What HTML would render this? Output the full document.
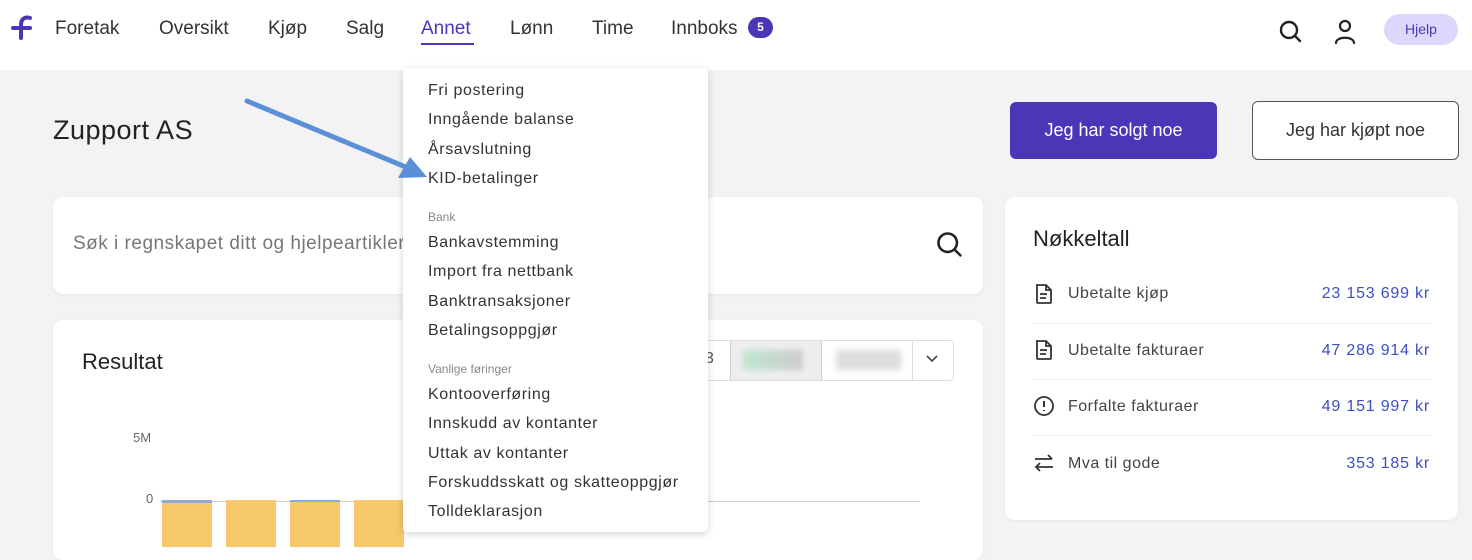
<!DOCTYPE html>
<html><head><meta charset="utf-8"><style>
*{margin:0;padding:0;box-sizing:border-box}
body{width:1472px;height:547px;overflow:hidden;background:#f3f3f3;font-family:"Liberation Sans",sans-serif;color:#2b2b2b;position:relative}
.abs{position:absolute}
.nav{position:absolute;left:0;top:0;width:1472px;height:70px;background:#fff}
.nav span{position:absolute;top:18px;font-size:19px;color:#333}
.card{position:absolute;background:#fff;border-radius:10px;box-shadow:0 1px 3px rgba(0,0,0,.06)}
.menu{position:absolute;left:403px;top:68px;width:305px;height:464px;background:#fff;border-radius:4px;box-shadow:0 2px 8px rgba(0,0,0,.18)}
.menu div{position:absolute;left:25px;font-size:16px;color:#333;letter-spacing:0.6px}
.menu .h{font-size:12px;color:#888;letter-spacing:0}
.row{position:absolute;left:1030px;width:400px;font-size:16px;color:#444;letter-spacing:0.5px}
.row .v{position:absolute;right:0;color:#3d4fbf;letter-spacing:0.8px}
.row .t{position:absolute;left:38px}
.sep{position:absolute;left:1032px;width:400px;height:1px;background:#eee}
.bar{position:absolute;top:500px;width:50px;height:47px;background:#f5c96b}
</style></head><body>
<div class="nav">
<svg class="abs" style="left:10px;top:14px" width="26" height="26" viewBox="0 0 26 26"><path d="M20 4 C14 2 11 6 11 11 L11 24" stroke="#4b36b8" stroke-width="4" fill="none" stroke-linecap="round"/><path d="M3 14 H20" stroke="#4b36b8" stroke-width="4" stroke-linecap="round"/></svg>
<span style="left:55px">Foretak</span><span style="left:159px">Oversikt</span><span style="left:268px">Kjøp</span><span style="left:346px">Salg</span><span style="left:421px;color:#4b36b8">Annet</span>
<div class="abs" style="left:421px;top:43px;width:53px;height:2px;background:#4b36b8"></div>
<span style="left:510px">Lønn</span><span style="left:592px">Time</span><span style="left:671px">Innboks</span>
<div class="abs" style="left:748px;top:17px;width:25px;height:21px;border-radius:11px;background:#4b36b8;color:#fff;font-size:12px;text-align:center;line-height:21px;font-weight:bold">5</div>
<svg class="abs" style="left:1278px;top:19px" width="26" height="26" viewBox="0 0 26 26"><circle cx="11" cy="11" r="8" stroke="#222" stroke-width="2.4" fill="none"/><path d="M17 17 L22 22" stroke="#222" stroke-width="2.4" stroke-linecap="round"/></svg>
<svg class="abs" style="left:1332px;top:18px" width="26" height="28" viewBox="0 0 26 28"><circle cx="13" cy="8" r="5" stroke="#222" stroke-width="2.2" fill="none"/><path d="M4 25 C4 18 22 18 22 25" stroke="#222" stroke-width="2.2" fill="none" stroke-linecap="round"/></svg>
<div class="abs" style="left:1384px;top:14px;width:74px;height:31px;border-radius:16px;background:#dcd8fb;color:#4b36b8;font-size:14px;text-align:center;line-height:31px">Hjelp</div>
</div>
<div class="abs" style="left:53px;top:115px;font-size:27px;color:#222;letter-spacing:0.5px">Zupport AS</div>
<div class="abs" style="left:1010px;top:102px;width:207px;height:57px;border-radius:6px;background:#4b36b8;color:#fff;font-size:18px;text-align:center;line-height:57px">Jeg har solgt noe</div>
<div class="abs" style="left:1252px;top:101px;width:207px;height:59px;border-radius:6px;background:#fff;border:1.5px solid #555;color:#333;font-size:18px;text-align:center;line-height:56px">Jeg har kjøpt noe</div>
<div class="card" style="left:53px;top:197px;width:930px;height:97px">
<div class="abs" style="left:20px;top:36px;font-size:19px;color:#777;letter-spacing:0.5px">Søk i regnskapet ditt og hjelpeartikler</div>
<svg class="abs" style="left:882px;top:33px" width="30" height="30" viewBox="0 0 26 26"><circle cx="11" cy="11" r="8" stroke="#222" stroke-width="2.2" fill="none"/><path d="M17 17 L22 22" stroke="#222" stroke-width="2.2" stroke-linecap="round"/></svg>
</div>
<div class="card" style="left:53px;top:320px;width:930px;height:240px">
<div class="abs" style="left:29px;top:29px;font-size:22px;color:#222">Resultat</div>
<div class="abs" style="left:80px;top:110px;font-size:13px;color:#666">5M</div>
<div class="abs" style="left:93px;top:171px;font-size:13px;color:#666">0</div>
<div class="abs" style="left:107px;top:181px;width:760px;height:1px;background:#ccc"></div>
<div class="abs" style="left:637px;top:20px;width:264px;height:41px;border:1px solid #ddd;border-radius:4px;background:#fff"></div>
<div class="abs" style="left:652px;top:30px;font-size:16px;color:#555">3</div>
<div class="abs" style="left:677px;top:21px;width:92px;height:39px;background:#eee;border-left:1px solid #ccc;border-right:1px solid #ccc"></div>
<div class="abs" style="left:690px;top:30px;width:60px;height:20px;background:linear-gradient(90deg,#bfe7d2,#ccc);filter:blur(3px)"></div>
<div class="abs" style="left:783px;top:30px;width:65px;height:20px;background:#ddd;filter:blur(3px)"></div>
<div class="abs" style="left:859px;top:21px;width:1px;height:39px;background:#ddd"></div>
<svg class="abs" style="left:872px;top:34px" width="14" height="10" viewBox="0 0 14 10"><path d="M2 2 L7 7 L12 2" stroke="#444" stroke-width="1.6" fill="none"/></svg>
</div>
<div class="bar" style="left:162px;border-top:3px solid #8fa9d8"></div>
<div class="bar" style="left:226px"></div>
<div class="bar" style="left:290px;border-top:2px solid #8fa9d8"></div>
<div class="bar" style="left:354px"></div>
<div class="card" style="left:1005px;top:197px;width:453px;height:323px"></div>
<div class="abs" style="left:1033px;top:226px;font-size:22px;color:#222">Nøkkeltall</div>
<svg class="abs" style="left:1034px;top:283px" width="20" height="22" viewBox="0 0 20 22"><path d="M3 2 H12 L17 7 V19 a1 1 0 0 1 -1 1 H4 a1 1 0 0 1 -1 -1 Z M12 2 V7 H17 M6 11 H13 M6 15 H12" stroke="#333" stroke-width="1.8" fill="none"/></svg>
<svg class="abs" style="left:1034px;top:339px" width="20" height="22" viewBox="0 0 20 22"><path d="M3 2 H12 L17 7 V19 a1 1 0 0 1 -1 1 H4 a1 1 0 0 1 -1 -1 Z M12 2 V7 H17 M6 11 H13 M6 15 H12" stroke="#333" stroke-width="1.8" fill="none"/></svg>
<svg class="abs" style="left:1033px;top:395px" width="22" height="22" viewBox="0 0 22 22"><circle cx="11" cy="11" r="9" stroke="#333" stroke-width="1.8" fill="none"/><path d="M11 6 V12 M11 15 V16" stroke="#333" stroke-width="2"/></svg>
<svg class="abs" style="left:1033px;top:452px" width="22" height="22" viewBox="0 0 22 22"><path d="M2 7 H19 M15 3 L19 7 M20 15 H3 M7 11 L3 15 L7 19" stroke="#333" stroke-width="1.8" fill="none"/></svg>
<div class="row" style="top:285px"><span class="t">Ubetalte kjøp</span><span class="v">23 153 699 kr</span></div>
<div class="sep" style="top:323px"></div>
<div class="row" style="top:342px"><span class="t">Ubetalte fakturaer</span><span class="v">47 286 914 kr</span></div>
<div class="sep" style="top:379px"></div>
<div class="row" style="top:398px"><span class="t">Forfalte fakturaer</span><span class="v">49 151 997 kr</span></div>
<div class="sep" style="top:435px"></div>
<div class="row" style="top:455px"><span class="t">Mva til gode</span><span class="v">353 185 kr</span></div>
<div class="menu">
<div style="top:14px">Fri postering</div>
<div style="top:43px">Inngående balanse</div>
<div style="top:73px">Årsavslutning</div>
<div style="top:102px">KID-betalinger</div>
<div class="h" style="top:142px">Bank</div>
<div style="top:166px">Bankavstemming</div>
<div style="top:195px">Import fra nettbank</div>
<div style="top:225px">Banktransaksjoner</div>
<div style="top:254px">Betalingsoppgjør</div>
<div class="h" style="top:294px">Vanlige føringer</div>
<div style="top:318px">Kontooverføring</div>
<div style="top:347px">Innskudd av kontanter</div>
<div style="top:377px">Uttak av kontanter</div>
<div style="top:406px">Forskuddsskatt og skatteoppgjør</div>
<div style="top:435px">Tolldeklarasjon</div>
</div>
<svg class="abs" style="left:0;top:0" width="1472" height="547"><path d="M247 101 L408 168" stroke="#5b8fd6" stroke-width="5" stroke-linecap="round"/><path d="M427 177 L398 178 L410 157 Z" fill="#5b8fd6"/></svg>
</body></html>
